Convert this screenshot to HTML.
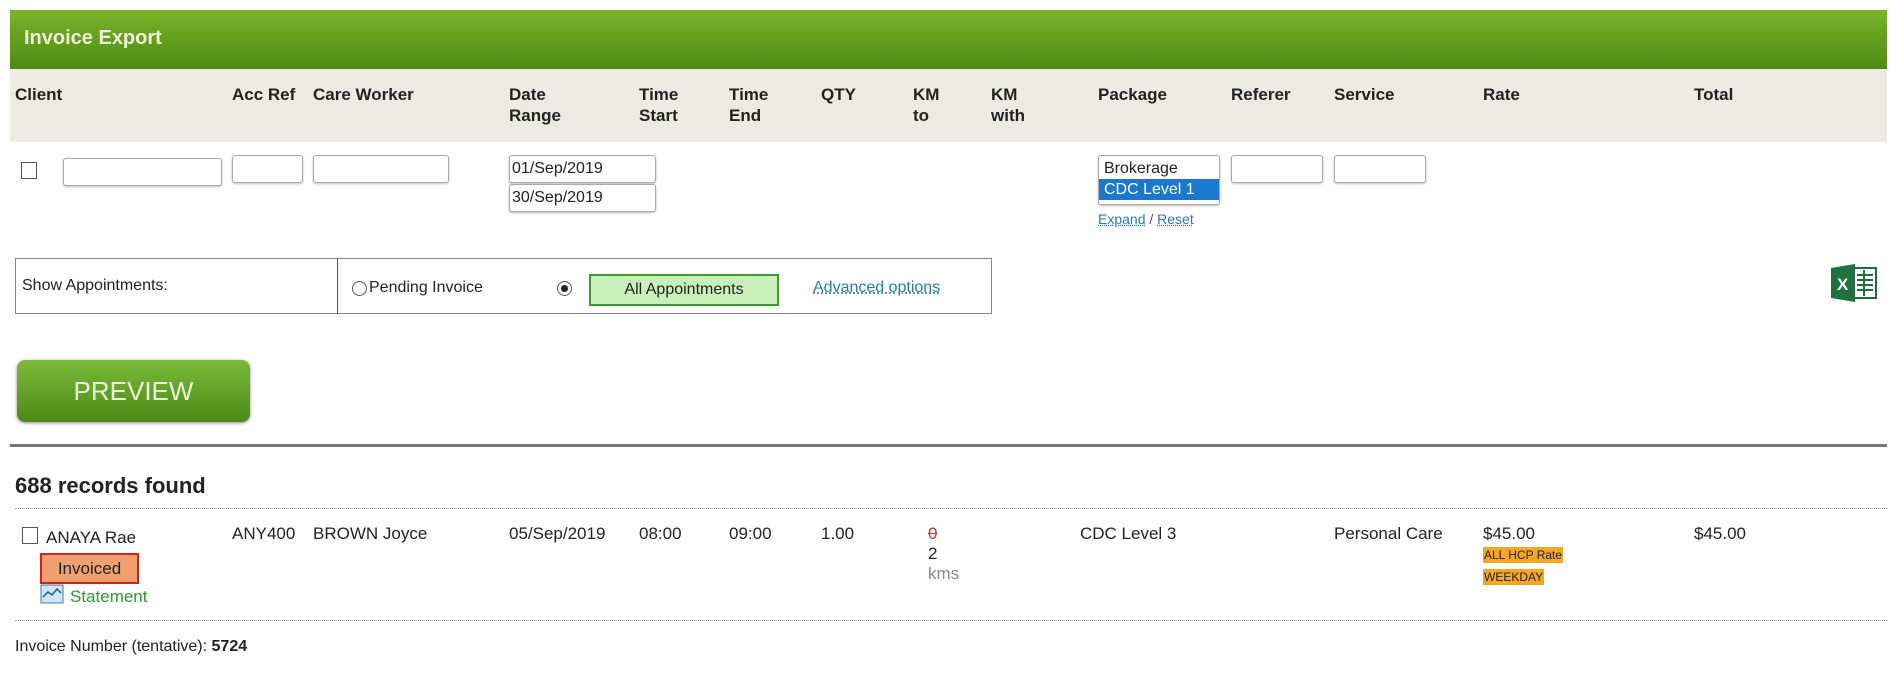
<!DOCTYPE html>
<html><head><meta charset="utf-8"><style>
*{box-sizing:border-box;margin:0;padding:0}
body{width:1893px;height:683px;background:#fff;font-family:"Liberation Sans",sans-serif;font-size:17px;color:#222;position:relative;overflow:hidden}
.a{position:absolute;white-space:nowrap}
.h{font-weight:bold;line-height:21px;color:#222}
.in{position:absolute;border:1px solid #aaa;border-radius:3px;background:#fff;box-shadow:0 1px 2px #bbb}
.cb{position:absolute;width:16px;height:17px;border:1px solid #555;background:#fff}
a{color:#2a7ab0}
</style></head><body>
<div class="a" style="left:10px;top:10px;width:1877px;height:59px;background:linear-gradient(#78b42a,#4e8a12);"></div>
<div class="a" style="left:24px;top:27px;color:#eef6d8;font-weight:bold;font-size:20px">Invoice Export</div>
<div class="a" style="left:10px;top:69px;width:1877px;height:73px;background:#ebebe3"></div>
<div class="a h" style="left:15px;top:84px">Client</div>
<div class="a h" style="left:232px;top:84px">Acc Ref</div>
<div class="a h" style="left:313px;top:84px">Care Worker</div>
<div class="a h" style="left:509px;top:84px">Date<br>Range</div>
<div class="a h" style="left:639px;top:84px">Time<br>Start</div>
<div class="a h" style="left:729px;top:84px">Time<br>End</div>
<div class="a h" style="left:821px;top:84px">QTY</div>
<div class="a h" style="left:913px;top:84px">KM<br>to</div>
<div class="a h" style="left:991px;top:84px">KM<br>with</div>
<div class="a h" style="left:1098px;top:84px">Package</div>
<div class="a h" style="left:1231px;top:84px">Referer</div>
<div class="a h" style="left:1334px;top:84px">Service</div>
<div class="a h" style="left:1483px;top:84px">Rate</div>
<div class="a h" style="left:1694px;top:84px">Total</div>

<div class="cb" style="left:21px;top:162px"></div>
<div class="in" style="left:63px;top:158px;width:159px;height:28px"></div>
<div class="in" style="left:232px;top:155px;width:71px;height:28px"></div>
<div class="in" style="left:313px;top:155px;width:136px;height:28px"></div>
<div class="in" style="left:509px;top:155px;width:147px;height:28px;padding:4px 2px;font-size:16px">01/Sep/2019</div>
<div class="in" style="left:509px;top:184px;width:147px;height:28px;padding:4px 2px;font-size:16px">30/Sep/2019</div>
<div class="in" style="left:1098px;top:155px;width:122px;height:50px;font-size:16px;padding-top:3px;overflow:hidden"><div style="padding-left:5px;line-height:20px">Brokerage</div><div style="background:#1a78d0;color:#fff;padding-left:5px;line-height:21px">CDC Level 1</div></div>
<div class="a" style="left:1098px;top:211px;font-size:14px;color:#555"><a style="text-decoration:underline dotted">Expand</a> / <a style="text-decoration:underline dotted">Reset</a></div>
<div class="in" style="left:1231px;top:155px;width:92px;height:28px"></div>
<div class="in" style="left:1334px;top:155px;width:92px;height:28px"></div>

<div class="a" style="left:15px;top:258px;width:977px;height:56px;border:1px solid #888"></div>
<div class="a" style="left:337px;top:258px;width:1px;height:56px;background:#555"></div>
<div class="a" style="left:22px;top:277px;font-size:16px">Show Appointments:</div>
<div class="a" style="left:352px;top:281px;width:15px;height:15px;border:1px solid #555;border-radius:50%"></div>
<div class="a" style="left:369px;top:279px;font-size:16px">Pending Invoice</div>
<div class="a" style="left:557px;top:281px;width:15px;height:15px;border:1px solid #555;border-radius:50%"><div style="width:7px;height:7px;background:#222;border-radius:50%;margin:3px"></div></div>
<div class="a" style="left:589px;top:274px;width:190px;height:32px;border:2px solid #3a9a2a;background:#c8f0b8;text-align:center;line-height:28px;font-size:16px">All Appointments</div>
<div class="a" style="left:813px;top:279px;font-size:16px"><a style="text-decoration:underline dotted">Advanced options</a></div>

<svg class="a" style="left:1831px;top:264px" width="47" height="38" viewBox="0 0 47 38"><rect x="18" y="4" width="27" height="30" fill="#fff" stroke="#1d6e3c" stroke-width="2"/><g stroke="#1d6e3c" stroke-width="2"><line x1="26" y1="11" x2="42" y2="11"/><line x1="26" y1="16" x2="42" y2="16"/><line x1="26" y1="21" x2="42" y2="21"/><line x1="26" y1="26" x2="42" y2="26"/><line x1="33" y1="6" x2="33" y2="32"/></g><polygon points="0,4 24,0 24,38 0,34" fill="#1e7140"/><text x="6" y="26" font-family="Liberation Sans" font-weight="bold" font-size="17" fill="#fff">X</text></svg>

<div class="a" style="left:17px;top:360px;width:233px;height:62px;border-radius:8px;background:linear-gradient(#7bbb38,#4c8a18);color:#eaf5dc;font-size:26px;text-align:center;line-height:62px;box-shadow:0 1px 3px #888">PREVIEW</div>

<div class="a" style="left:10px;top:444px;width:1877px;height:3px;background:#777"></div>
<div class="a" style="left:15px;top:473px;font-weight:bold;font-size:22px">688 records found</div>
<div class="a" style="left:15px;top:508px;width:1872px;border-top:1px dotted #999"></div>
<div class="cb" style="left:22px;top:527px"></div>
<div class="a" style="left:46px;top:528px">ANAYA Rae</div>
<div class="a" style="left:40px;top:553px;width:99px;height:31px;border:2px solid #d42020;background:#f0a070;text-align:center;line-height:27px">Invoiced</div>
<svg class="a" style="left:40px;top:584px" width="24" height="20"><rect x="1" y="1" width="22" height="18" fill="#cfe6f5" stroke="#3a7ab0"/><polyline points="3,13 8,8 12,11 17,5 21,9" fill="none" stroke="#2a5a90" stroke-width="1.5"/></svg>
<div class="a" style="left:70px;top:587px;color:#2a9a30">Statement</div>
<div class="a" style="left:232px;top:524px">ANY400</div>
<div class="a" style="left:313px;top:524px">BROWN Joyce</div>
<div class="a" style="left:509px;top:524px">05/Sep/2019</div>
<div class="a" style="left:639px;top:524px">08:00</div>
<div class="a" style="left:729px;top:524px">09:00</div>
<div class="a" style="left:821px;top:524px">1.00</div>
<div class="a" style="left:928px;top:524px;line-height:20px"><span style="color:#c33;text-decoration:line-through">0</span><br>2<br><span style="color:#888">kms</span></div>
<div class="a" style="left:1080px;top:524px">CDC Level 3</div>
<div class="a" style="left:1334px;top:524px">Personal Care</div>
<div class="a" style="left:1483px;top:524px">$45.00</div>
<div class="a" style="left:1483px;top:547px;background:#f5a623;font-size:12px;padding:1px 1px">ALL HCP Rate</div>
<div class="a" style="left:1483px;top:569px;background:#f5a623;font-size:12px;padding:1px 1px">WEEKDAY</div>
<div class="a" style="left:1694px;top:524px">$45.00</div>
<div class="a" style="left:15px;top:620px;width:1872px;border-top:1px dotted #999"></div>
<div class="a" style="left:15px;top:638px;font-size:16px">Invoice Number (tentative): <b>5724</b></div>
</body></html>
